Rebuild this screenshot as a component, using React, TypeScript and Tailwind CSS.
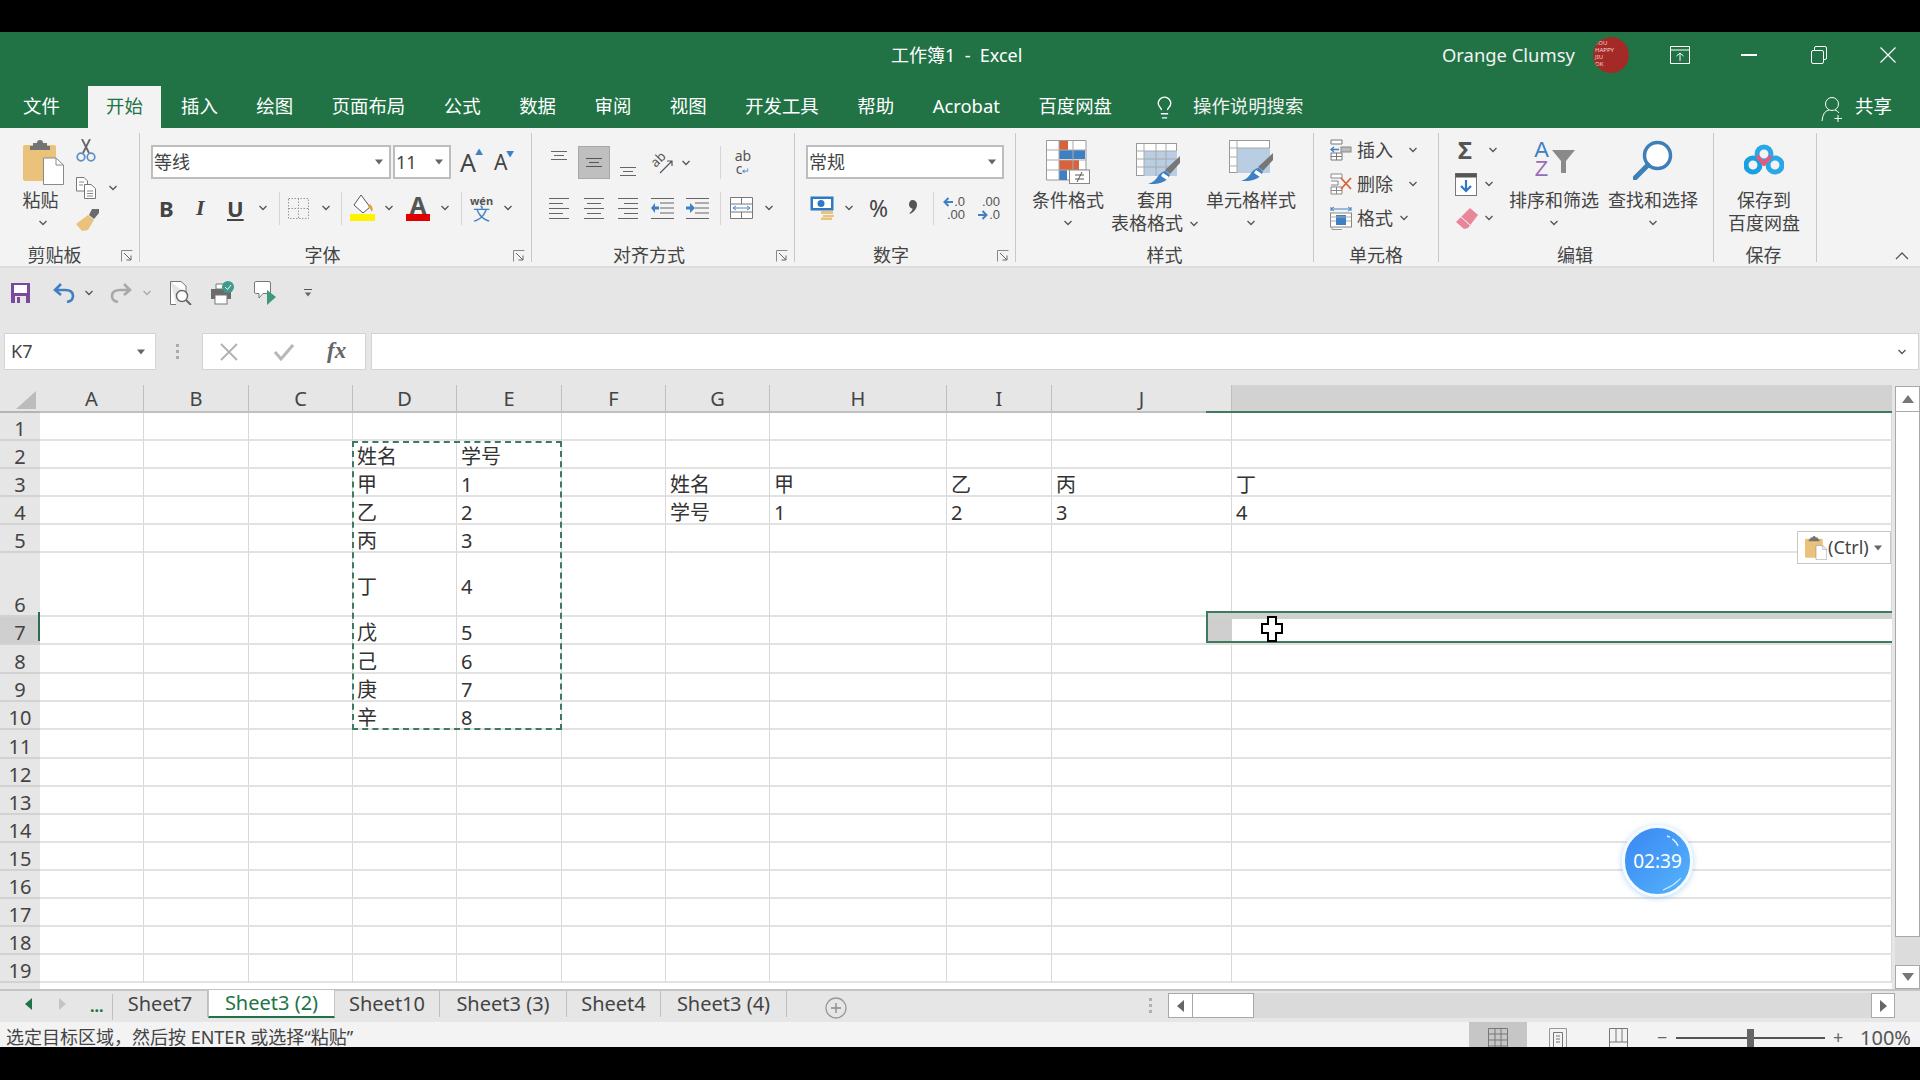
import React from "react";
import { Lightbulb } from "lucide-react";

const Chev = ({ className = "" }: { className?: string }) => (
  <svg viewBox="0 0 10 6" className={`w-[10px] h-[6px] shrink-0 ${className}`}>
    <path d="M1.5 1 L5 4.5 L8.5 1" fill="none" stroke="#555" strokeWidth="1.3" />
  </svg>
);

const Caret = ({ className = "" }: { className?: string }) => (
  <svg viewBox="0 0 10 6" className={`w-[10px] h-[6px] shrink-0 ${className}`}>
    <path d="M1 0.5 H9 L5 5.5 Z" fill="#666" />
  </svg>
);

const Sep = ({ className = "" }: { className?: string }) => (
  <div className={`w-px h-[33px] bg-[#d6d6d6] shrink-0 ${className}`} />
);

const Launcher = () => (
  <svg viewBox="0 0 12 12" className="w-[12px] h-[12px]">
    <path d="M0.5 11.5 V0.5 H11.5" fill="none" stroke="#888" />
    <path d="M3 3 L10 10 M10 5.5 V10 H5.5" fill="none" stroke="#666" />
  </svg>
);

function Lines({ rows, w = 20, h = 21, stroke = "#666", className = "" }: { rows: number[][]; w?: number; h?: number; stroke?: string; className?: string }) {
  const step = rows.length > 1 ? (h - 1) / (rows.length - 1) : 0;
  return (
    <svg width={w} height={h} viewBox={`0 0 ${w} ${h}`} className={`shrink-0 ${className}`}>
      {rows.map((r, i) => (
        <line key={i} x1={r[0]} x2={r[1]} y1={i * step + 0.5} y2={i * step + 0.5} stroke={stroke} />
      ))}
    </svg>
  );
}

const PasteIcon = ({ small = false }: { small?: boolean }) => (
  <svg viewBox="0 0 41 45" preserveAspectRatio="none" className={small ? "w-[22px] h-[24px] shrink-0" : "w-[41px] h-[45px] shrink-0"}>
    <rect x="0" y="5" width="33" height="36" rx="2" fill="#EBC27C" />
    <path d="M10 6 V3 H14 A3 3 0 0 1 20 3 H24 V6 H27 V10 H7 V6 Z" fill="#737373" />
    <path d="M20.5 18 H33 L40.5 25 V44.5 H20.5 Z" fill="#fff" stroke="#8a8a8a" />
    <path d="M33 18 V25 H40.5" fill="none" stroke="#8a8a8a" />
  </svg>
);

const CutIcon = () => (
  <svg width="20" height="23" viewBox="0 0 20 23" className="shrink-0">
    <path d="M6 0 L13 14 M14 0 L7 14" stroke="#666" strokeWidth="1.8" />
    <circle cx="5" cy="18" r="3.8" fill="none" stroke="#5b8fc7" strokeWidth="1.7" />
    <circle cx="15" cy="18" r="3.8" fill="none" stroke="#5b8fc7" strokeWidth="1.7" />
  </svg>
);

const CopyIcon = () => (
  <svg width="20" height="22" viewBox="0 0 20 22" className="shrink-0">
    <path d="M0.5 0.5 H8 L11.5 4 V14 H0.5 Z" fill="#fff" stroke="#777" />
    <path d="M8.5 7.5 H15 L19.5 11.5 V21.5 H8.5 Z" fill="#fff" stroke="#777" />
    <path d="M11 14 H17 M11 16.5 H17 M11 19 H17 M3 5 H8 M3 8 H7" stroke="#888" />
  </svg>
);

const PainterIcon = () => (
  <svg width="24" height="22" viewBox="0 0 24 22" className="shrink-0">
    <path d="M16 0 L23 0 L23 4 L18 10 L13 6 Z" fill="#6b6b6b" />
    <path d="M12 6 L18 11 L12 21 L6 22 L0 15 Z" fill="#EBC27C" />
  </svg>
);

const BorderIcon = () => (
  <svg width="21" height="21" viewBox="0 0 21 21" className="shrink-0">
    <path d="M0.5 0.5 H20.5 V20.5 H0.5 Z M10.5 0.5 V20.5 M0.5 10.5 H20.5" fill="none" stroke="#999" strokeDasharray="1.5 1.5" />
  </svg>
);

const FillIcon = () => (
  <svg width="25" height="26" viewBox="0 0 25 26" className="shrink-0">
    <path d="M11 0 L20 12 L13 18 L4 10 Z" fill="#fff" stroke="#555" />
    <path d="M20 9 Q24 13 22 17 Q20 13 18 12 Z" fill="#e2a23b" />
    <rect x="0" y="19" width="25" height="7" fill="#FFF200" />
  </svg>
);

const OrientIcon = () => (
  <div className="relative w-[21px] h-[22px] shrink-0">
    <span className="absolute left-[-2px] top-[-1px] text-[13px] leading-[16px] text-[#555] -rotate-45">ab</span>
    <svg viewBox="0 0 21 22" className="absolute inset-0 w-[21px] h-[22px]">
      <path d="M8 21 L20 9 M15 9 H20 V14" fill="none" stroke="#555" strokeWidth="1.2" />
    </svg>
  </div>
);

const IndentIcon = ({ flip = false }: { flip?: boolean }) => (
  <svg width="23" height="21" viewBox="0 0 23 21" className="shrink-0">
    <path d="M0 0.5 H23 M9 5 H23 M9 10 H23 M9 15 H23 M0 20.5 H23" stroke="#666" />
    {flip ? (
      <path d="M0 8.5 H4 V5 L9 10 L4 15 V11.5 H0 Z" fill="#3f80c4" />
    ) : (
      <path d="M8 8.5 H4 V5 L0 10 L4 15 V11.5 H8 Z" fill="#3f80c4" />
    )}
  </svg>
);

const MergeIcon = () => (
  <svg width="23" height="22" viewBox="0 0 23 22" className="shrink-0">
    <path d="M0.5 0.5 H22.5 V21.5 H0.5 Z M0.5 7 H22.5 M0.5 15 H22.5 M11.5 0.5 V7 M11.5 15 V21.5" fill="#fff" stroke="#777" />
    <path d="M3 11 H20 M6 9 L3 11 L6 13 M17 9 L20 11 L17 13" fill="none" stroke="#4a86c5" />
  </svg>
);

const AccountingIcon = () => (
  <svg width="24" height="24" viewBox="0 0 24 24" className="shrink-0">
    <rect x="0.5" y="0.5" width="23" height="14" fill="#2f78c4" />
    <rect x="3" y="3" width="18" height="9" fill="#fff" />
    <circle cx="11" cy="7.5" r="3.5" fill="#2f78c4" />
    <path d="M11 15 H23 V18 H11 Z M13 19 H24 V21 H13 Z M11 21.5 H22 V24 H11 Z" fill="#EBC27C" />
  </svg>
);

const CondFormatIcon = () => (
  <svg width="44" height="44" viewBox="0 0 44 44" className="shrink-0">
    <path d="M0.5 0.5 H40 V40 H0.5 Z" fill="#fff" stroke="#999" />
    <rect x="13" y="1" width="9" height="9" fill="#d8623a" />
    <rect x="13" y="10" width="26" height="9" fill="#3f80c4" />
    <rect x="13" y="20" width="20" height="10" fill="#d8623a" />
    <rect x="13" y="30" width="8" height="10" fill="#3f80c4" />
    <path d="M0.5 10 H40 M0.5 20 H40 M0.5 30 H40 M13 0.5 V40 M27 0.5 V40" fill="none" stroke="#aaa" />
    <rect x="23.5" y="30" width="20" height="13.5" fill="#fff" stroke="#888" />
    <path d="M29 35 H38 M29 39 H38 M31 42 L36 32" stroke="#555" fill="none" />
  </svg>
);

const TableFormatIcon = ({ cell = false }: { cell?: boolean }) => (
  <svg width="44" height="42" viewBox="0 0 44 42" className="shrink-0">
    <rect x="0.5" y="0.5" width="40" height="32" fill="#fff" stroke="#999" />
    <rect x="8" y="8" width="33" height="25" fill="#b9cde3" />
    {!cell && <path d="M0.5 8 H40 M0.5 16 H40 M0.5 24 H40 M8 0.5 V33 M20 0.5 V33 M30 0.5 V33" stroke="#aaa" fill="none" />}
    {cell && <path d="M0.5 8 H40 M8 0.5 V33 M0.5 26 H8 M0.5 17 H8" stroke="#aaa" fill="none" />}
    <path d="M44 13 L44 20 L34 31 L29 27 Z" fill="#777" />
    <path d="M30 28 L34 32 Q30 42 12 41 Q20 38 22 33 Q26 28 30 28 Z" fill="#3f80c4" />
    <path d="M27 30 L33 34 L31 37 L25 33 Z" fill="#fff" />
  </svg>
);

const InsertIcon = () => (
  <svg width="22" height="22" viewBox="0 0 22 22" className="shrink-0">
    <path d="M1 1 H12 V5 H1 Z M1 14 H12 V21 H1 Z M6.5 14 V21 M1 17.5 H12" fill="#fff" stroke="#777" />
    <rect x="11" y="8" width="10" height="5" fill="#bbb" stroke="#888" />
    <path d="M9 10.5 H1 M4 8 L1 10.5 L4 13" fill="none" stroke="#3f80c4" strokeWidth="1.3" />
  </svg>
);

const DeleteIcon = () => (
  <svg width="22" height="22" viewBox="0 0 22 22" className="shrink-0">
    <path d="M1 1 H12 V5 H1 Z M1 14 H12 V21 H1 Z M6.5 14 V21 M1 17.5 H12 M1 8 H8 V12 H1" fill="#fff" stroke="#888" />
    <path d="M11 5 L21 16 M21 5 L11 16" stroke="#d8623a" strokeWidth="1.8" />
  </svg>
);

const FormatIcon = () => (
  <svg width="22" height="24" viewBox="0 0 22 24" className="shrink-0">
    <path d="M1 3 H21 M1 1 V5 M21 1 V5 M4 1 L1 3 L4 5 M18 1 L21 3 L18 5" fill="none" stroke="#3f80c4" />
    <rect x="0.5" y="7" width="21" height="14" fill="#fff" stroke="#888" />
    <rect x="6" y="9" width="10" height="10" fill="#3f80c4" />
    <path d="M0.5 11 H21 M0.5 15 H6 M16 15 H21" stroke="#aaa" />
    <path d="M2 21 V23.5 H12" stroke="#999" fill="none" />
  </svg>
);

const FillDownIcon = () => (
  <svg width="22" height="23" viewBox="0 0 22 23" className="shrink-0">
    <rect x="0.5" y="0.5" width="21" height="22" fill="#fff" stroke="#777" />
    <rect x="0.5" y="0.5" width="21" height="4" fill="#555" />
    <path d="M11 7 V18 M6 13 L11 18 L16 13" fill="none" stroke="#2f78c4" strokeWidth="2.2" />
  </svg>
);

const EraserIcon = () => (
  <svg width="22" height="21" viewBox="0 0 22 21" className="shrink-0">
    <path d="M14 0 L22 7 L12 20 L8 21 L0 14 Z" fill="#e9869a" />
    <path d="M5 9 L14 17" stroke="#fff" strokeWidth="1" />
  </svg>
);

const SortIcon = () => (
  <div className="flex w-[42px] h-[38px]">
    <div className="w-[17px] flex flex-col items-center text-[22px] leading-[19px] font-['Liberation_Sans',sans-serif]">
      <span className="text-[#3f80c4]">A</span>
      <span className="text-[#9b6bb8]">Z</span>
    </div>
    <svg viewBox="0 0 23 24" className="ml-[2px] mt-[10px] w-[23px] h-[24px]">
      <path d="M0 0 H23 L14 11 V23 H9 V11 Z" fill="#8a8a8a" />
    </svg>
  </div>
);

const FindIcon = () => (
  <svg width="40" height="40" viewBox="0 0 40 40" className="shrink-0">
    <circle cx="24.5" cy="15.5" r="13" fill="#fff" stroke="#3f7fb8" strokeWidth="3.5" />
    <path d="M15 25 L2 38" stroke="#3f7fb8" strokeWidth="5" strokeLinecap="round" />
  </svg>
);

const BaiduIcon = () => (
  <svg width="40" height="32" viewBox="0 0 40 32" className="shrink-0">
    <circle cx="20" cy="10" r="7" fill="none" stroke="#29a7e6" strokeWidth="5" />
    <circle cx="9" cy="21" r="7" fill="none" stroke="#1a9fe0" strokeWidth="5" />
    <circle cx="31" cy="21" r="7" fill="none" stroke="#29a7e6" strokeWidth="5" />
    <path d="M13 12 L21 21 M27 12 L19 21" stroke="#e8587a" strokeWidth="4" />
  </svg>
);

const DecArrow = ({ flip = false }: { flip?: boolean }) => (
  <svg viewBox="0 0 10 10" className="w-[10px] h-[10px] mr-[1px]">
    <path d={flip ? "M0 5 H8 M4.5 1 L8.5 5 L4.5 9" : "M10 5 H2 M5.5 1 L1.5 5 L5.5 9"} fill="none" stroke="#3f80c4" strokeWidth="2" />
  </svg>
);

function BigButton({ icon, lines, className = "" }: { icon: React.ReactNode; lines: string[]; className?: string }) {
  return (
    <div className={`flex flex-col items-center shrink-0 ${className}`}>
      <div className="h-[56px] pt-[7px] flex justify-center">{icon}</div>
      {lines.map((l) => (
        <div key={l} className="leading-[23px] whitespace-nowrap">{l}</div>
      ))}
      <div className="h-[21px] flex items-center"><Chev /></div>
    </div>
  );
}

function Group({ label, launcher, width, labelClass = "", children }: { label: string; launcher?: boolean; width: string; labelClass?: string; children: React.ReactNode }) {
  return (
    <section className={`relative h-[129px] border-r border-[#c8c8c8] shrink-0 ${width}`}>
      <div className="h-[105px]">{children}</div>
      <div className={`h-[34px] flex items-center justify-center leading-none ${labelClass}`}>{label}</div>
      {launcher && (
        <div className="absolute right-[6px] bottom-[0px]"><Launcher /></div>
      )}
    </section>
  );
}

const Select = ({ text, width, className = "" }: { text: string; width: string; className?: string }) => (
  <div className={`h-[34px] bg-white border-2 border-[#bdbdbd] flex items-center justify-between pl-[1px] pr-[5px] shrink-0 ${width} ${className}`}>
    <span>{text}</span>
    <Caret />
  </div>
);

function Ribbon() {
  return (
    <div className="h-[140px] bg-[#f3f3f3] border-b-2 border-[#dcdcdc] flex pt-[5px] text-[18px] text-[#444]">
      <Group label="剪贴板" launcher width="w-[140px]" labelClass="pr-[30px]">
        <div className="flex">
          <div className="ml-[22px] w-[42px] flex flex-col items-center">
            <div className="h-[56px] pt-[7px]"><PasteIcon /></div>
            <div className="leading-[23px] whitespace-nowrap -ml-[5px]">粘贴</div>
            <div className="h-[21px] flex items-center"><Chev /></div>
          </div>
          <div className="ml-[12px] flex flex-col">
            <div className="h-[36px] pt-[6px]"><CutIcon /></div>
            <div className="h-[36px] flex items-center gap-[12px] pt-[2px]"><CopyIcon /><Chev /></div>
            <div className="h-[26px] flex items-end"><PainterIcon /></div>
          </div>
        </div>
      </Group>

      <Group label="字体" launcher width="w-[392px]" labelClass="pr-[26px]">
        <div className="flex items-center pt-[12px]">
          <Select text="等线" width="w-[240px]" className="ml-[11px]" />
          <Select text="11" width="w-[58px]" className="ml-[2px]" />
          <span className="ml-[9px] w-[20px] text-[25px] leading-none relative">A<span className="absolute -top-[2px] left-[15px] text-[8px] text-[#3f80c4]">▲</span></span>
          <span className="ml-[14px] w-[19px] text-[21px] leading-none relative">A<span className="absolute -top-[2px] left-[12px] text-[8px] text-[#3f80c4]">▼</span></span>
        </div>
        <div className="flex items-center mt-[12px] h-[34px]">
          <span className="ml-[19px] w-[16px] font-bold text-[22px] leading-none">B</span>
          <span className="ml-[21px] w-[12px] italic font-bold text-[22px] leading-none font-['Liberation_Serif',serif]">I</span>
          <span className="ml-[19px] w-[16px] underline text-[22px] font-bold leading-none">U</span>
          <Chev className="ml-[15px]" />
          <Sep className="ml-[11px]" />
          <div className="ml-[8px]"><BorderIcon /></div>
          <Chev className="ml-[12px]" />
          <Sep className="ml-[10px]" />
          <div className="ml-[8px]"><FillIcon /></div>
          <Chev className="ml-[9px]" />
          <div className="ml-[12px] w-[24px] flex flex-col items-center">
            <span className="text-[24px] leading-[19px] font-bold text-[#555]">A</span>
            <div className="w-[24px] h-[7px] bg-[#e00000]" />
          </div>
          <Chev className="ml-[10px]" />
          <Sep className="ml-[11px]" />
          <div className="ml-[9px] w-[21px] flex flex-col items-center leading-none">
            <span className="text-[11px] text-[#555] font-bold">wén</span>
            <span className="text-[17px] text-[#3f80c4] -mt-[1px]">文</span>
          </div>
          <Chev className="ml-[11px]" />
        </div>
      </Group>

      <Group label="对齐方式" launcher width="w-[263px]" labelClass="pr-[28px]">
        <div className="flex items-center pt-[13px] h-[46px]">
          <Lines className="ml-[17px] -mt-[14px]" h={9} rows={[[2, 18], [5, 15], [2, 18]]} />
          <div className="ml-[9px] w-[32px] h-[33px] bg-[#bfbfbf] border border-[#a8a8a8] flex items-center justify-center">
            <Lines h={9} rows={[[2, 18], [5, 15], [2, 18]]} stroke="#555" />
          </div>
          <Lines className="ml-[8px] mt-[18px]" h={9} rows={[[2, 18], [5, 15], [2, 18]]} />
          <div className="ml-[14px]"><OrientIcon /></div>
          <Chev className="ml-[8px]" />
          <Sep className="ml-[29px]" />
          <div className="ml-[13px] w-[18px] flex flex-col items-center text-[14px] leading-[13px] text-[#555]">
            <span>ab</span>
            <span className="whitespace-nowrap">c<span className="text-[#3f80c4] text-[9px]">↵</span></span>
          </div>
        </div>
        <div className="flex items-center mt-[12px] h-[34px]">
          <Lines className="ml-[17px]" rows={[[0, 20], [0, 14], [0, 20], [0, 14], [0, 20]]} />
          <Lines className="ml-[15px]" rows={[[0, 20], [3, 17], [0, 20], [3, 17], [0, 20]]} />
          <Lines className="ml-[14px]" rows={[[0, 20], [6, 20], [0, 20], [6, 20], [0, 20]]} />
          <div className="ml-[13px]"><IndentIcon /></div>
          <div className="ml-[12px]"><IndentIcon flip /></div>
          <Sep className="ml-[11px]" />
          <div className="ml-[9px]"><MergeIcon /></div>
          <Chev className="ml-[11px]" />
        </div>
      </Group>

      <Group label="数字" launcher width="w-[221px]" labelClass="pr-[28px]">
        <div className="flex items-center pt-[12px]">
          <Select text="常规" width="w-[198px]" className="ml-[11px]" />
        </div>
        <div className="flex items-center mt-[12px] h-[34px]">
          <div className="ml-[15px]"><AccountingIcon /></div>
          <Chev className="ml-[10px]" />
          <span className="ml-[15px] w-[20px] text-[23px] leading-none">%</span>
          <svg viewBox="0 0 8 14" className="ml-[20px] w-[8px] h-[14px] -mt-[2px]">
            <path d="M3.5 0 C6 0 8 1.5 8 4.5 C8 8.5 5 12 1 14 L0.5 13 C2.5 11.5 3.5 10 3.5 8.5 C1.5 8.5 0 6.5 0 4.5 C0 2 1.5 0 3.5 0 Z" fill="#555" />
          </svg>
          <Sep className="ml-[16px]" />
          <div className="ml-[9px] w-[22px] text-[13px] leading-[13px] text-[#555] flex flex-col items-end font-['Liberation_Sans',sans-serif]">
            <span className="flex items-center"><DecArrow />.0</span>
            <span>.00</span>
          </div>
          <div className="ml-[14px] w-[21px] text-[13px] leading-[13px] text-[#555] flex flex-col items-end font-['Liberation_Sans',sans-serif]">
            <span>.00</span>
            <span className="flex items-center"><DecArrow flip />.0</span>
          </div>
        </div>
      </Group>

      <Group label="样式" width="w-[298px]">
        <div className="flex">
          <BigButton className="ml-[15px] w-[74px]" icon={<CondFormatIcon />} lines={["条件格式"]} />
          <div className="ml-[5px] w-[90px] flex flex-col items-center shrink-0">
            <div className="h-[56px] pt-[10px] pl-[6px]"><TableFormatIcon /></div>
            <div className="leading-[23px]">套用</div>
            <div className="leading-[23px] flex items-center gap-[6px] whitespace-nowrap">表格格式<Chev /></div>
          </div>
          <BigButton className="ml-[6px] w-[90px]" icon={<TableFormatIcon cell />} lines={["单元格样式"]} />
        </div>
      </Group>

      <Group label="单元格" width="w-[125px]">
        <div className="flex items-center h-[34px]"><div className="ml-[16px]"><InsertIcon /></div><span className="ml-[5px] w-[36px]">插入</span><Chev className="ml-[15px]" /></div>
        <div className="flex items-center h-[34px]"><div className="ml-[16px]"><DeleteIcon /></div><span className="ml-[5px] w-[36px]">删除</span><Chev className="ml-[15px]" /></div>
        <div className="flex items-center h-[34px]"><div className="ml-[16px]"><FormatIcon /></div><span className="ml-[5px] w-[36px]">格式</span><Chev className="ml-[6px]" /></div>
      </Group>

      <Group label="编辑" width="w-[275px]" labelClass="pr-[2px]">
        <div className="flex">
          <div className="w-[70px] shrink-0">
            <div className="flex items-center h-[34px]"><span className="ml-[19px] w-[17px] text-[24px] leading-none font-bold text-[#555]">Σ</span><Chev className="ml-[13px]" /></div>
            <div className="flex items-center h-[34px]"><div className="ml-[16px]"><FillDownIcon /></div><Chev className="ml-[7px]" /></div>
            <div className="flex items-center h-[34px]"><div className="ml-[17px]"><EraserIcon /></div><Chev className="ml-[6px]" /></div>
          </div>
          <BigButton className="w-[90px]" icon={<SortIcon />} lines={["排序和筛选"]} />
          <BigButton className="ml-[9px] w-[90px]" icon={<FindIcon />} lines={["查找和选择"]} />
        </div>
      </Group>

      <Group label="保存" width="w-[103px]" labelClass="pr-[3px]">
        <div className="w-[100px] flex flex-col items-center">
          <div className="h-[56px] pt-[11px]"><BaiduIcon /></div>
          <div className="leading-[23px]">保存到</div>
          <div className="leading-[23px]">百度网盘</div>
        </div>
      </Group>

      <div className="flex-1 flex items-end justify-end pr-[11px] pb-[6px]">
        <svg viewBox="0 0 14 8" className="w-[14px] h-[8px]"><path d="M1 7 L7 1 L13 7" fill="none" stroke="#555" strokeWidth="1.3" /></svg>
      </div>
    </div>
  );
}

function TitleBar() {
  return (
    <div className="h-[54px] flex items-center text-white text-[18px] pb-[8px]">
      <div className="ml-[891px] w-[551px] whitespace-pre">工作簿1  -  Excel</div>
      <div className="w-[133px] text-[18.4px] text-[#f2f2f2] whitespace-nowrap">Orange Clumsy</div>
      <div className="ml-[18px] w-[36px] h-[36px] rounded-full bg-[#a32a26] text-[6px] leading-[7px] pl-[2px] pt-[3px] text-[#f3d8d5] overflow-hidden">YOU<br />HAPPY<br />JIU<br />OK</div>
      <svg viewBox="0 0 20 18" className="ml-[41px] w-[20px] h-[18px]">
        <path d="M0.5 0.5 H19.5 V17.5 H0.5 Z M0.5 4 H19.5 M10 15 V7 M6.5 10 L10 7 L13.5 10" fill="none" stroke="#fff" />
      </svg>
      <div className="ml-[51px] w-[16px] h-[2px] bg-white" />
      <svg viewBox="0 0 16 18" className="ml-[54px] w-[16px] h-[18px]">
        <path d="M3.5 4 V2 Q3.5 0.5 5 0.5 H14 Q15.5 0.5 15.5 2 V12 Q15.5 13.5 14 13.5 H12.5 M0.5 6 Q0.5 4.5 2 4.5 H11 Q12.5 4.5 12.5 6 V16 Q12.5 17.5 11 17.5 H2 Q0.5 17.5 0.5 16 Z" fill="none" stroke="#fff" />
      </svg>
      <svg viewBox="0 0 16 16" className="ml-[53px] w-[16px] h-[16px]">
        <path d="M0.5 0.5 L15.5 15.5 M15.5 0.5 L0.5 15.5" stroke="#fff" strokeWidth="1.3" />
      </svg>
    </div>
  );
}

const MENU = ["插入", "绘图", "页面布局", "公式", "数据", "审阅", "视图", "开发工具", "帮助", "Acrobat", "百度网盘"];

function MenuBar() {
  return (
    <div className="h-[42px] flex items-center text-white text-[18.4px]">
      <span className="ml-[23px] w-[37px] pb-[2px] whitespace-nowrap">文件</span>
      <div className="ml-[28px] w-[73px] h-full bg-[#f3f3f3] text-[#217346] flex items-center justify-center pb-[2px]">开始</div>
      <div className="ml-[20px] w-[931px] shrink-0 flex items-center justify-between whitespace-nowrap pb-[2px]">
        {MENU.map((m) => <span key={m}>{m}</span>)}
      </div>
      <Lightbulb className="ml-[40px] w-[25px] h-[25px] shrink-0" strokeWidth={1.3} />
      <span className="ml-[16px] w-[111px] shrink-0 text-[#f0f0f0] pb-[2px] whitespace-nowrap">操作说明搜索</span>
      <svg viewBox="0 0 24 26" className="ml-[517px] w-[24px] h-[26px] mt-[3px] shrink-0">
        <circle cx="11" cy="8" r="6.5" fill="none" stroke="#fff" />
        <path d="M1 25 Q2 15 8 14 M14 14 Q17 15 18 17 M17 19 V26 M13.5 22.5 H21" fill="none" stroke="#fff" />
      </svg>
      <span className="ml-[10px] shrink-0 pb-[2px] whitespace-nowrap">共享</span>
    </div>
  );
}

function QuickAccess() {
  return (
    <div className="h-[50px] flex items-center">
      <svg viewBox="0 0 19 20" className="ml-[11px] w-[19px] h-[20px]">
        <path d="M0 0 H19 V20 H0 Z" fill="#7c4a9c" />
        <rect x="3" y="2" width="13" height="8" fill="#fff" />
        <rect x="4" y="13" width="11" height="7" fill="#e6e6e6" />
        <rect x="6" y="14" width="3" height="6" fill="#7c4a9c" />
      </svg>
      <svg viewBox="0 0 22 20" className="ml-[23px] w-[22px] h-[20px]">
        <path d="M8 1 L2 7 L8 12 M2 7 H12 Q20 7 20 13 Q20 18 14 19" fill="none" stroke="#3f80c4" strokeWidth="2.6" />
      </svg>
      <Chev className="ml-[9px]" />
      <svg viewBox="0 0 22 20" className="ml-[16px] w-[22px] h-[20px]">
        <path d="M14 1 L20 7 L14 12 M20 7 H10 Q2 7 2 13 Q2 18 8 19" fill="none" stroke="#a8a8a8" strokeWidth="2.6" />
      </svg>
      <Chev className="ml-[10px] opacity-40" />
      <svg viewBox="0 0 22 24" className="ml-[18px] w-[22px] h-[24px]">
        <path d="M0.5 0.5 H11 L16 5 V12 M6 23.5 H0.5 V0.5" fill="#fff" stroke="#777" />
        <circle cx="12" cy="15" r="5.5" fill="#fff" stroke="#666" strokeWidth="1.4" />
        <path d="M16 19 L21 24" stroke="#666" strokeWidth="2" />
      </svg>
      <svg viewBox="0 0 24 24" className="ml-[19px] w-[24px] h-[24px]">
        <rect x="0" y="8" width="20" height="10" fill="#6b6b6b" />
        <path d="M5 3 H14 V8 H5 Z" fill="#fff" stroke="#777" />
        <rect x="4" y="14" width="12" height="9" fill="#fff" stroke="#777" />
        <circle cx="17" cy="6" r="6" fill="#3e9a8a" />
        <path d="M14 6 L16.5 8.5 L20 4" fill="none" stroke="#fff" />
      </svg>
      <svg viewBox="0 0 22 24" className="ml-[19px] w-[22px] h-[24px]">
        <path d="M1.5 0.5 H15 Q16.5 0.5 16.5 2 V11 Q16.5 12.5 15 12.5 H9 L5 17 V12.5 H1.5 Q0.5 12.5 0.5 11 V2 Q0.5 0.5 1.5 0.5 Z" fill="#fff" stroke="#777" />
        <path d="M13 9 L22 16 L13 24 Z" fill="#3e9a76" />
      </svg>
      <div className="ml-[28px] flex flex-col items-center gap-[2px]">
        <div className="w-[8px] h-[1px] bg-[#555]" />
        <Caret className="w-[8px]! h-[5px]!" />
      </div>
    </div>
  );
}

function FormulaBar() {
  return (
    <div className="mt-[15px] h-[37px] flex text-[#444] text-[18px]">
      <div className="ml-[4px] w-[152px] bg-white border border-[#d4d4d4] flex items-center justify-between pl-[6px] pr-[9px]">
        <span>K7</span>
        <Caret />
      </div>
      <div className="ml-[20px] w-[4px] flex flex-col justify-center gap-[3px]">
        <div className="w-[3px] h-[3px] bg-[#aaa]" />
        <div className="w-[3px] h-[3px] bg-[#aaa]" />
        <div className="w-[3px] h-[3px] bg-[#aaa]" />
      </div>
      <div className="ml-[22px] w-[164px] bg-white border border-[#d4d4d4] flex items-center">
        <svg viewBox="0 0 18 18" className="ml-[17px] w-[18px] h-[18px]"><path d="M1 1 L17 17 M17 1 L1 17" stroke="#b0b0b0" strokeWidth="1.8" /></svg>
        <svg viewBox="0 0 20 18" className="ml-[36px] w-[20px] h-[18px]"><path d="M1 9 L7 16 L19 2" fill="none" stroke="#b8b8b8" strokeWidth="3" /></svg>
        <span className="ml-[33px] font-['Liberation_Serif',serif] italic font-bold text-[23px] text-[#666]">fx</span>
      </div>
      <div className="ml-[5px] flex-1 mr-[1px] bg-white border border-[#d4d4d4] flex items-center justify-end pr-[11px]">
        <Chev />
      </div>
    </div>
  );
}

const COLS = ["A", "B", "C", "D", "E", "F", "G", "H", "I", "J", ""];
const ROW_HEIGHTS = ["h-[28px]", "h-[28px]", "h-[28px]", "h-[28px]", "h-[28px]", "h-[64px]", "h-[28px]", "h-[29px]", "h-[28px]", "h-[28px]", "h-[29px]", "h-[28px]", "h-[28px]", "h-[28px]", "h-[28px]", "h-[28px]", "h-[28px]", "h-[28px]", "h-[28px]"];
const CELLS: Record<string, string> = {
  D2: "姓名", E2: "学号", D3: "甲", E3: "1", D4: "乙", E4: "2", D5: "丙", E5: "3", D6: "丁", E6: "4",
  D7: "戊", E7: "5", D8: "己", E8: "6", D9: "庚", E9: "7", D10: "辛", E10: "8",
  G3: "姓名", H3: "甲", I3: "乙", J3: "丙", K3: "丁",
  G4: "学号", H4: "1", I4: "2", J4: "3", K4: "4",
};

function Sheet() {
  return (
    <div className="relative w-[1892px] shrink-0 grid grid-cols-[40px_104px_105px_104px_104px_105px_104px_104px_177px_105px_180px_660px] content-start bg-white">
      <div className="h-[28px] bg-[#e6e6e6] border-b-2 border-[#b4b4b4] flex items-end justify-end pr-[4px] pb-[2px]">
        <svg viewBox="0 0 20 18" className="w-[20px] h-[18px]"><path d="M20 0 V18 H0 Z" fill="#bcbcbc" /></svg>
      </div>
      {COLS.map((c, i) => (
        <div key={i} className={`h-[28px] pt-[2px] text-[20px] leading-[24px] text-[#444] flex items-center justify-center border-b-2 border-r ${c ? "bg-[#e6e6e6] border-[#c0c0c0]" : "bg-[#d2d2d2] border-[#d2d2d2]"}`}>{c}</div>
      ))}
      {ROW_HEIGHTS.map((h, r) => (
        <React.Fragment key={r}>
          <div className={`${h} text-[20px] leading-[20px] text-[#444] flex items-end justify-center border-b-2 border-[#d2d2d2] ${r === 6 ? "bg-[#cfcfcf] text-[#2f6b4e]" : "bg-[#e6e6e6]"}`}>{r + 1}</div>
          {COLS.map((_, c) => {
            const name = "ABCDEFGHIJK"[c] + (r + 1);
            return (
              <div key={c} className={`${h} pl-[4px] text-[20px] text-[#333] leading-[20px] flex border-b-2 border-r border-b-[#e2e2e2] border-r-[#d8d8d8] ${r === 5 ? "items-center pt-[6px]" : "items-end"}`}>{CELLS[name]}</div>
            );
          })}
        </React.Fragment>
      ))}
      <div className="col-span-12 h-[6px] flex">
        <div className="w-[40px] bg-[#e6e6e6]" />
      </div>

      {/* marching ants around the copied range */}
      <div className="absolute left-[352px] top-[56px] w-[210px] h-[289px] border-2 border-dashed border-[#3d7a60]" />
      {/* selection line under header, left by the screen recording */}
      <div className="absolute left-[1206px] top-[26px] w-[686px] h-[2px] bg-[#3f7a5e]" />
      <div className="absolute left-[38px] top-[227px] w-[2px] h-[29px] bg-[#2f6b4e]" />

      {/* stale K7 selection frame */}
      <div className="absolute left-[1206px] top-[226px] w-[686px] h-[32px] border-2 border-r-0 border-[#3f7a5e] bg-white flex flex-col">
        <div className="h-[6px] bg-[#cdd2cf]" />
        <div className="w-[24px] flex-1 bg-[#cfcfcf]" />
      </div>
      <svg viewBox="0 0 22 26" className="absolute left-[1261px] top-[231px] w-[22px] h-[26px]">
        <path d="M7 1 H15 V8 H21 V17 H15 V25 H7 V17 H1 V8 H7 Z" fill="#fff" stroke="#000" strokeWidth="2" />
      </svg>

      {/* paste options */}
      <div className="absolute left-[1797px] top-[146px] w-[94px] h-[33px] bg-white border border-[#c6c6c6] flex items-center pl-[7px] text-[18px] text-[#444]">
        <PasteIcon small />
        <span className="ml-[1px]">(Ctrl)</span>
        <Caret className="ml-[4px]" />
      </div>

      {/* recorder timer */}
      <div className="absolute left-[1622px] top-[440px] w-[71px] h-[72px] rounded-full border-[3px] border-[#f4fbff] bg-linear-to-br from-[#3a86f2] to-[#56b4fb] shadow-[0_1px_6px_rgba(120,180,240,0.55)] flex items-center justify-center text-white text-[19px]">
        02:39
        <svg viewBox="0 0 65 66" className="absolute inset-0 w-full h-full">
          <path d="M42 8 Q50 11 53 18" fill="none" stroke="#dff0ff" strokeWidth="1.5" strokeDasharray="3 3 12" />
          <path d="M38 62 Q50 58 56 50 Q48 58 38 62 Z" fill="#bfe6ff" stroke="#bfe6ff" />
        </svg>
      </div>
    </div>
  );
}

function VScroll() {
  return (
    <div className="flex-1 ml-[3px] mt-[1px] bg-[#dcdcdc] flex flex-col">
      <div className="h-[26px] bg-white border border-[#a8a8a8] flex items-center justify-center">
        <svg viewBox="0 0 12 8" className="w-[12px] h-[8px]"><path d="M6 0 L12 8 H0 Z" fill="#777" /></svg>
      </div>
      <div className="h-[525px] bg-white border border-[#a8a8a8] border-t-0" />
      <div className="flex-1" />
      <div className="h-[24px] bg-white border border-[#a8a8a8] flex items-center justify-center">
        <svg viewBox="0 0 12 8" className="w-[12px] h-[8px]"><path d="M6 8 L12 0 H0 Z" fill="#777" /></svg>
      </div>
    </div>
  );
}

const TABS = [
  { name: "Sheet7", w: "w-[95px]" },
  { name: "Sheet3 (2)", w: "w-[127px]", active: true },
  { name: "Sheet10", w: "w-[105px]" },
  { name: "Sheet3 (3)", w: "w-[127px]" },
  { name: "Sheet4", w: "w-[94px]" },
  { name: "Sheet3 (4)", w: "w-[126px]" },
];

function SheetTabs() {
  return (
    <div className="h-[33px] bg-[#e6e6e6] border-t-2 border-[#c4c4c4] flex text-[20px] text-[#444]">
      <svg viewBox="0 0 7 12" className="ml-[25px] mt-[7px] w-[7px] h-[12px]"><path d="M7 0 V12 L0 6 Z" fill="#217346" /></svg>
      <svg viewBox="0 0 7 12" className="ml-[27px] mt-[7px] w-[7px] h-[12px]"><path d="M0 0 V12 L7 6 Z" fill="#c4c4c4" /></svg>
      <span className="ml-[24px] w-[14px] font-bold text-[#217346] text-[16px] leading-[30px]">...</span>
      <div className="ml-[8px] w-px h-[26px] bg-[#c0c0c0] mt-[3px]" />
      {TABS.map((t) =>
        t.active ? (
          <div key={t.name} className={`${t.w} h-[29px] -mt-[2px] bg-white border-x border-t border-[#c4c4c4] border-b-2 border-b-[#217346] text-[#217346] flex items-center justify-center`}>{t.name}</div>
        ) : (
          <div key={t.name} className={`${t.w} h-[26px] flex items-center justify-center border-r border-[#c0c0c0]`}>{t.name}</div>
        ),
      )}
      <svg viewBox="0 0 22 22" className="ml-[38px] mt-[6px] w-[22px] h-[22px]">
        <circle cx="11" cy="11" r="10" fill="none" stroke="#999" strokeWidth="1.3" />
        <path d="M11 6 V16 M6 11 H16" stroke="#888" strokeWidth="1.3" />
      </svg>
      <div className="ml-[302px] mt-[3px] h-[22px] flex flex-col justify-center gap-[3px]">
        <div className="w-[3px] h-[3px] bg-[#b0b0b0]" />
        <div className="w-[3px] h-[3px] bg-[#b0b0b0]" />
        <div className="w-[3px] h-[3px] bg-[#b0b0b0]" />
      </div>
      <div className="ml-[16px] mt-[2px] w-[727px] h-[25px] bg-[#dadada] flex">
        <div className="w-[25px] bg-white border border-[#a8a8a8] flex items-center justify-center">
          <svg viewBox="0 0 7 12" className="w-[7px] h-[12px]"><path d="M7 0 V12 L0 6 Z" fill="#666" /></svg>
        </div>
        <div className="w-[61px] bg-white border border-l-0 border-[#a8a8a8]" />
        <div className="flex-1" />
        <div className="w-[24px] bg-white border border-[#a8a8a8] flex items-center justify-center">
          <svg viewBox="0 0 7 12" className="w-[7px] h-[12px]"><path d="M0 0 V12 L7 6 Z" fill="#666" /></svg>
        </div>
      </div>
    </div>
  );
}

function StatusBar() {
  return (
    <div className="h-[25px] bg-[#f3f3f3] flex overflow-hidden text-[18px] text-[#444]">
      <span className="ml-[6px] pt-[6px] leading-[19px] whitespace-nowrap w-[1463px] shrink-0">选定目标区域，然后按 ENTER 或选择“粘贴”</span>
      <div className="w-[58px] h-[28px] bg-[#c6c6c6] flex justify-center pt-[6px] shrink-0">
        <svg viewBox="0 0 20 24" className="w-[20px] h-[24px]"><path d="M0.5 0.5 H19.5 V23.5 H0.5 Z M7 0.5 V23.5 M13 0.5 V23.5 M0.5 6 H19.5 M0.5 12 H19.5 M0.5 18 H19.5" fill="none" stroke="#777" /></svg>
      </div>
      <svg viewBox="0 0 18 24" className="ml-[22px] mt-[6px] w-[18px] h-[24px] shrink-0"><path d="M0.5 0.5 H17.5 V23.5 H0.5 Z" fill="none" stroke="#999" /><path d="M4.5 4.5 H13.5 V19.5 H4.5 Z M7 8 H11 M7 11 H11 M7 14 H11" fill="none" stroke="#777" /></svg>
      <svg viewBox="0 0 19 24" className="ml-[42px] mt-[6px] w-[19px] h-[24px] shrink-0"><path d="M0.5 0.5 H18.5 V23.5 H0.5 Z M7 0.5 V14 M13 0.5 V14 M0.5 14 H18.5" fill="none" stroke="#777" /></svg>
      <span className="ml-[29px] w-[10px] text-[#666] pt-[6px] leading-[19px] shrink-0">−</span>
      <div className="ml-[9px] relative w-[149px] h-[2px] bg-[#555] mt-[15px] shrink-0">
        <div className="absolute left-[71px] -top-[8px] w-[7px] h-[30px] bg-[#666]" />
      </div>
      <span className="ml-[8px] w-[14px] text-[#666] pt-[6px] leading-[19px] shrink-0">+</span>
      <span className="ml-[13px] text-[20px] pt-[6px] leading-[19px] text-[#555] shrink-0">100%</span>
    </div>
  );
}

export default function App() {
  return (
    <div className="w-[1920px] h-[1080px] bg-black pt-[32px] overflow-hidden font-['Noto_Sans','Noto_Sans_CJK_SC',sans-serif]">
      <div className="h-[1015px] flex flex-col bg-[#e6e6e6]">
        <div className="bg-[#217346]">
          <TitleBar />
          <MenuBar />
        </div>
        <Ribbon />
        <QuickAccess />
        <FormulaBar />
        <div className="mt-[15px] h-[604px] flex overflow-hidden">
          <Sheet />
          <VScroll />
        </div>
        <SheetTabs />
        <StatusBar />
      </div>
    </div>
  );
}
